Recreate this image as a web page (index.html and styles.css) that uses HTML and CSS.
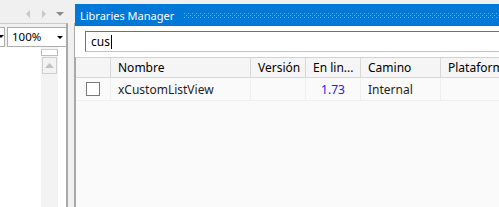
FILE: index.html
```html
<!DOCTYPE html>
<html>
<head>
<meta charset="utf-8">
<link rel="stylesheet" href="styles.css">
</head>
<body>
<div class="screen">
  <div class="left">
    <div class="toolbar">
      <svg class="nav" width="40" height="10" viewBox="0 0 40 10">
        <polygon points="4,1 0,5 4,9" fill="#c8c8c8"/>
        <polygon points="16,1 20,5 16,9" fill="#c8c8c8"/>
        <polygon points="30,3 38,3 34,7" fill="#8a8a8a"/>
      </svg>
    </div>
    <div class="left-body">
      <div class="pane">
        <div class="combos">
          <div class="combo-stub"><span class="arrow"></span></div>
          <div class="combo"><span class="combo-text">100%</span><span class="arrow"></span></div>
        </div>
        <div class="pane-body">
          <div class="canvas"></div>
          <div class="vscroll">
            <div class="sb-box"></div>
            <div class="sb-btn">
              <svg width="9" height="5" viewBox="0 0 9 5"><polygon points="0,5 9,5 4.5,0" fill="#c2c2c2"/></svg>
            </div>
          </div>
          <div class="pane-pad"></div>
        </div>
      </div>
      <div class="strip"></div>
    </div>
  </div>
  <div class="win">
    <div class="titlebar">
      <span class="title">Libraries Manager</span>
      <svg class="dots" width="100%" height="6">
        <defs>
          <pattern id="dp" width="4" height="4" patternUnits="userSpaceOnUse">
            <rect x="0" y="0" width="1" height="1" fill="#6cb2ee"/>
            <rect x="2" y="2" width="1" height="1" fill="#6cb2ee"/>
          </pattern>
        </defs>
        <rect width="100%" height="5" fill="url(#dp)"/>
      </svg>
    </div>
    <div class="search-wrap">
      <div class="search"><span class="search-text">cus</span><span class="caret"></span></div>
    </div>
    <div class="grid">
      <div class="row head">
        <div class="cell c0"></div>
        <div class="cell c1">Nombre</div>
        <div class="cell c2">Versión</div>
        <div class="cell c3">En lin...</div>
        <div class="cell c4">Camino</div>
        <div class="cell c5">Plataforma</div>
      </div>
      <div class="row data">
        <div class="cell c0"><span class="check"></span></div>
        <div class="cell c1">xCustomListView</div>
        <div class="cell c2"></div>
        <div class="cell c3 num">1.73</div>
        <div class="cell c4">Internal</div>
        <div class="cell c5"></div>
      </div>
    </div>
  </div>
</div>
</body>
</html>
```
FILE: styles.css
```css
* { box-sizing: border-box; }
html, body {
  margin: 0;
  padding: 0;
  width: 499px;
  height: 207px;
  overflow: hidden;
  background: #f0f0f0;
  font-family: "Noto Sans", "Open Sans", sans-serif;
  font-size: 11px;
  color: #000;
}
.screen {
  display: flex;
  width: 499px;
  height: 207px;
}
.left {
  width: 75px;
  flex: none;
  display: flex;
  flex-direction: column;
}
.toolbar {
  height: 23px;
  display: flex;
  align-items: center;
  padding-left: 26px;
  padding-top: 4px;
}
.nav { display: block; }
.left-body {
  flex: 1;
  display: flex;
}
.pane {
  width: 68px;
  border-top: 1px solid #c9c9c9;
  border-right: 2px solid #a9a9a9;
  display: flex;
  flex-direction: column;
}
.combos {
  height: 23px;
  display: flex;
  gap: 2px;
  padding-top: 3px;
}
.combo-stub {
  width: 5px;
  height: 20px;
  border: 1px solid #adadad;
  border-left: none;
  background: #fff;
  position: relative;
}
.combo {
  flex: 1;
  height: 20px;
  border: 1px solid #adadad;
  border-right: none;
  background: #fff;
  display: flex;
  align-items: center;
  justify-content: space-between;
  padding: 0 3px 0 4px;
}
.combo-text { font-size: 11.5px; line-height: 1; }
.arrow {
  width: 0;
  height: 0;
  border-left: 3px solid transparent;
  border-right: 3px solid transparent;
  border-top: 3px solid #000;
}
.combo-stub .arrow {
  position: absolute;
  left: -2px;
  top: 7px;
}
.pane-body {
  flex: 1;
  display: flex;
  background: #fff;
}
.canvas { width: 41px; }
.vscroll {
  width: 17px;
  background: #f3f3f3;
  padding-top: 2px;
  display: flex;
  flex-direction: column;
  align-items: stretch;
}
.sb-box {
  height: 7px;
  border: 1px solid #bdbdbd;
  border-top-color: #d0d0d0;
  background: #fff;
  margin-bottom: 1px;
}
.sb-btn {
  height: 17px;
  margin: 0 1px;
  border: 1px solid #cfcfcf;
  background: #f3f3f3;
  display: flex;
  align-items: center;
  justify-content: center;
}
.sb-btn svg { display: block; }
.pane-pad { flex: 1; }
.strip {
  width: 7px;
  border-right: 1px solid #a9a9a9;
}
.win {
  flex: 1;
  margin-top: 4px;
  background: #fff;
  display: flex;
  flex-direction: column;
  min-width: 0;
}
.titlebar {
  height: 22px;
  flex: none;
  background: #0078d7;
  color: #fff;
  display: flex;
  align-items: center;
  padding-left: 5px;
}
.title {
  font-size: 11px;
  white-space: nowrap;
}
.dots {
  flex: 1;
  display: block;
  margin-left: 10px;
  margin-top: 2px;
}
.search-wrap {
  padding: 5px 0 5px 10px;
}
.search {
  height: 21px;
  border: 1px solid #1f86d9;
  border-bottom-color: #9ccdf2;
  border-right: none;
  display: flex;
  align-items: center;
  padding-left: 5px;
}
.search-text { font-size: 12px; line-height: 1; }
.caret {
  width: 1px;
  height: 14px;
  background: #000;
  margin-left: 1px;
}
.grid {
  flex: 1;
  background: #fafafa;
  border-left: 1px solid #a9a9a9;
  border-top: 1px solid #d2d2d2;
}
.row {
  display: flex;
  white-space: nowrap;
}
.head {
  height: 20px;
  background: #f5f5f5;
  border-bottom: 1px solid #d8d8d8;
}
.data {
  height: 23px;
  border-bottom: 1px solid #f0f0f0;
}
.cell {
  display: flex;
  align-items: center;
  padding-left: 7px;
  overflow: hidden;
  flex: none;
  font-size: 12px;
}
.head .cell { border-right: 1px solid #d8d8d8; }
.data .cell { border-right: 1px solid #f0f0f0; color: #1e1e1e; }
.c0 { width: 35px; padding-left: 0; }
.c1 { width: 140px; }
.c2 { width: 55px; }
.c3 { width: 55px; }
.c4 { width: 80px; }
.c5 { width: 100px; }
.data .num { color: #2121e0; justify-content: center; padding-left: 0; }
.check {
  width: 14px;
  height: 14px;
  border: 1px solid #7a7a7a;
  background: #fff;
  margin-left: 10px;
}
```
